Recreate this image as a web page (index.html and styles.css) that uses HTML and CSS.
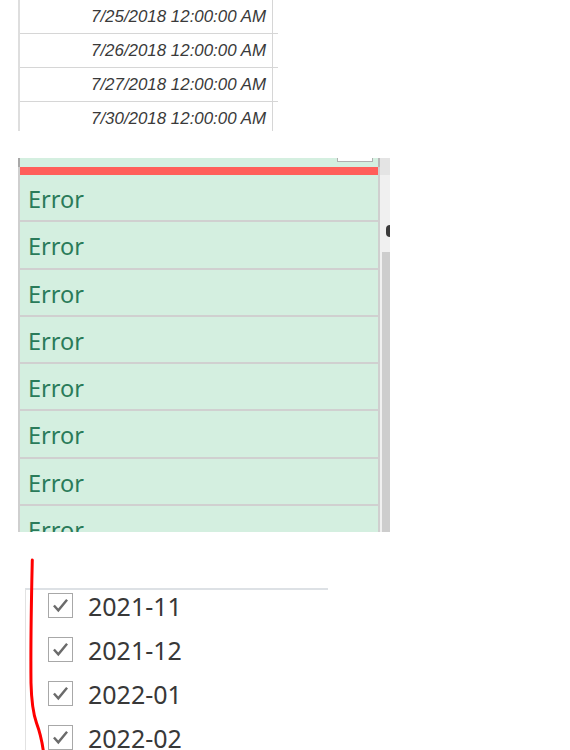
FILE: index.html
```html
<!DOCTYPE html>
<html>
<head>
<meta charset="utf-8">
<link rel="stylesheet" href="styles.css">
</head>
<body>
<section class="dates">
  <div class="drow"><div class="dcell">7/25/2018 12:00:00 AM</div><div class="dpad"></div></div>
  <div class="drow"><div class="dcell">7/26/2018 12:00:00 AM</div><div class="dpad"></div></div>
  <div class="drow"><div class="dcell">7/27/2018 12:00:00 AM</div><div class="dpad"></div></div>
  <div class="drow last"><div class="dcell">7/30/2018 12:00:00 AM</div><div class="dpad"></div></div>
</section>

<section class="errors">
  <div class="epanel">
    <div class="ehead"><div class="ebox"></div></div>
    <div class="ered"></div>
    <div class="erow">Error</div>
    <div class="erow">Error</div>
    <div class="erow">Error</div>
    <div class="erow">Error</div>
    <div class="erow">Error</div>
    <div class="erow">Error</div>
    <div class="erow">Error</div>
    <div class="erow">Error</div>
  </div>
  <div class="escroll">
    <div class="stop"></div>
    <div class="strack"><span class="smark"></span></div>
    <div class="sthumb"></div>
  </div>
</section>

<section class="filter">
  <div class="flist">
    <label class="fitem"><span class="cb"><svg viewBox="0 0 24 24"><path d="M4.5 12 L9.5 17.5 L19.5 5.5" fill="none" stroke="#6b6b6b" stroke-width="2.8"/></svg></span><span class="ft">2021-11</span></label>
    <label class="fitem"><span class="cb"><svg viewBox="0 0 24 24"><path d="M4.5 12 L9.5 17.5 L19.5 5.5" fill="none" stroke="#6b6b6b" stroke-width="2.8"/></svg></span><span class="ft">2021-12</span></label>
    <label class="fitem"><span class="cb"><svg viewBox="0 0 24 24"><path d="M4.5 12 L9.5 17.5 L19.5 5.5" fill="none" stroke="#6b6b6b" stroke-width="2.8"/></svg></span><span class="ft">2022-01</span></label>
    <label class="fitem"><span class="cb"><svg viewBox="0 0 24 24"><path d="M4.5 12 L9.5 17.5 L19.5 5.5" fill="none" stroke="#6b6b6b" stroke-width="2.8"/></svg></span><span class="ft">2022-02</span></label>
  </div>
  <svg class="redline" width="60" height="195" viewBox="0 0 60 195">
    <path d="M32.3 5 C31.5 40, 30.5 80, 31 128 C31.5 148, 33 158, 36.5 168 C39.5 176, 42 186, 43.5 197" fill="none" stroke="#ff0000" stroke-width="3" stroke-linecap="round"/>
  </svg>
</section>
</body>
</html>
```
FILE: styles.css
```css
html, body {
  margin: 0;
  padding: 0;
  background: #ffffff;
}
body {
  width: 570px;
  height: 750px;
  overflow: hidden;
  font-family: "Noto Sans", "Open Sans", sans-serif;
}

/* dates table */
.dates {
  margin-left: 18px;
  width: 260px;
  height: 131px;
  overflow: hidden;
  border-left: 2px solid #dedede;
  box-sizing: border-box;
}
.drow {
  display: flex;
  height: 34px;
  box-sizing: border-box;
  border-bottom: 1.5px solid #d6d6d6;
}
.drow.last { border-bottom: none; }
.dcell {
  width: 253px;
  box-sizing: border-box;
  padding-right: 6px;
  text-align: right;
  font-family: "Liberation Sans", Arial, sans-serif;
  font-style: italic;
  font-size: 16.9px;
  line-height: 33px;
  color: #3a3a3a;
  border-right: 1px solid #d6d6d6;
}
.dpad { flex: 1; }

/* errors panel */
.errors {
  margin-top: 27px;
  margin-left: 18px;
  width: 372px;
  height: 374px;
  display: flex;
  overflow: hidden;
}
.epanel {
  width: 362px;
  box-sizing: border-box;
  border-left: 2px solid #cfcfcf;
  border-right: 2px solid #cfcfcf;
  background: #d4efe0;
}
.ehead {
  height: 9px;
  position: relative;
  box-shadow: -2px 0 0 #a8a8a8, 2px 0 0 #b8b8b8;
}
.ebox {
  position: absolute;
  right: 5px;
  top: 0;
  width: 34px;
  height: 3px;
  background: #ffffff;
  border: 1px solid #b0b0b0;
  border-top: none;
}
.ered {
  height: 8px;
  background: #ff5f5a;
}
.erow {
  height: 47.3px;
  box-sizing: border-box;
  border-bottom: 2px solid #d0d0d0;
  padding-left: 8px;
  padding-top: 3px;
  font-size: 23.5px;
  line-height: 42px;
  color: #2a7b5a;
}
.escroll {
  width: 10px;
  display: flex;
  flex-direction: column;
}
.stop {
  height: 17px;
  background: #e4e4e4;
}
.strack {
  height: 77px;
  background: #f0f0f0;
  position: relative;
}
.smark {
  position: absolute;
  right: 0;
  top: 50px;
  width: 4px;
  height: 12px;
  background: #3a3a3a;
  border-radius: 4px 0 0 4px;
}
.sthumb {
  flex: 1;
  background: #cdcdcd;
  border-left: 2px solid #f0f0f0;
}

/* filter list */
.filter {
  position: relative;
  margin-top: 23px;
  padding-top: 33px;
  height: 162px;
}
.flist {
  margin-left: 25px;
  width: 303px;
  height: 162px;
  border-top: 2px solid #dde1e5;
  border-left: 1px solid #e2e2e2;
  box-sizing: border-box;
  padding-left: 22px;
  padding-top: 3px;
  display: flex;
  flex-direction: column;
  gap: 19px;
}
.fitem {
  display: flex;
  align-items: center;
  height: 25px;
  gap: 15px;
}
.cb {
  width: 25px;
  height: 25px;
  flex: none;
  box-sizing: border-box;
  border: 1px solid #a8a8a8;
  display: flex;
  align-items: center;
  justify-content: center;
  background: #fff;
}
.cb svg { display: block; width: 21px; height: 21px; }
.ft {
  font-size: 25px;
  color: #383838;
  line-height: 25px;
  position: relative;
  top: 1px;
}
.redline {
  position: absolute;
  left: 0;
  top: 0;
}
```
